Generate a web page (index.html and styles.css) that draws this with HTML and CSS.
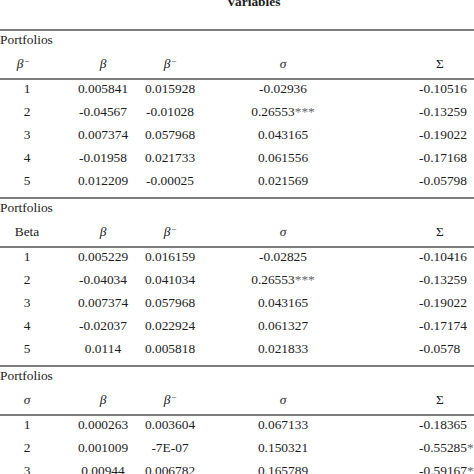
FILE: index.html
```html
<!DOCTYPE html>
<html>
<head>
<meta charset="utf-8">
<link rel="stylesheet" href="styles.css">
</head>
<body>
<div class="page">
  <div class="title">Variables</div>
  <div class="table">
    <div class="section">
      <div class="group">Portfolios</div>
      <div class="row head">
        <div class="c c1 c1s"><span><i>β</i><sup>−</sup></span></div>
        <div class="c"><span><i>β</i></span></div>
        <div class="c"><span><i>β</i><sup>−</sup></span></div>
        <div class="c"><span><i>σ</i></span></div>
        <div class="c c5h">Σ</div>
      </div>
      <div class="body">
        <div class="row"><div class="c c1">1</div><div class="c">0.005841</div><div class="c">0.015928</div><div class="c">-0.02936</div><div class="c c5">-0.10516</div></div>
        <div class="row"><div class="c c1">2</div><div class="c">-0.04567</div><div class="c">-0.01028</div><div class="c"><span>0.26553<span class="st">***</span></span></div><div class="c c5">-0.13259</div></div>
        <div class="row"><div class="c c1">3</div><div class="c">0.007374</div><div class="c">0.057968</div><div class="c">0.043165</div><div class="c c5">-0.19022</div></div>
        <div class="row"><div class="c c1">4</div><div class="c">-0.01958</div><div class="c">0.021733</div><div class="c">0.061556</div><div class="c c5">-0.17168</div></div>
        <div class="row"><div class="c c1">5</div><div class="c">0.012209</div><div class="c">-0.00025</div><div class="c">0.021569</div><div class="c c5">-0.05798</div></div>
      </div>
    </div>
    <div class="section">
      <div class="group">Portfolios</div>
      <div class="row head">
        <div class="c c1">Beta</div>
        <div class="c"><span><i>β</i></span></div>
        <div class="c"><span><i>β</i><sup>−</sup></span></div>
        <div class="c"><span><i>σ</i></span></div>
        <div class="c c5h">Σ</div>
      </div>
      <div class="body">
        <div class="row"><div class="c c1">1</div><div class="c">0.005229</div><div class="c">0.016159</div><div class="c">-0.02825</div><div class="c c5">-0.10416</div></div>
        <div class="row"><div class="c c1">2</div><div class="c">-0.04034</div><div class="c">0.041034</div><div class="c"><span>0.26553<span class="st">***</span></span></div><div class="c c5">-0.13259</div></div>
        <div class="row"><div class="c c1">3</div><div class="c">0.007374</div><div class="c">0.057968</div><div class="c">0.043165</div><div class="c c5">-0.19022</div></div>
        <div class="row"><div class="c c1">4</div><div class="c">-0.02037</div><div class="c">0.022924</div><div class="c">0.061327</div><div class="c c5">-0.17174</div></div>
        <div class="row"><div class="c c1">5</div><div class="c">0.0114</div><div class="c">0.005818</div><div class="c">0.021833</div><div class="c c5">-0.0578</div></div>
      </div>
    </div>
    <div class="section">
      <div class="group">Portfolios</div>
      <div class="row head">
        <div class="c c1"><span><i>σ</i></span></div>
        <div class="c"><span><i>β</i></span></div>
        <div class="c"><span><i>β</i><sup>−</sup></span></div>
        <div class="c"><span><i>σ</i></span></div>
        <div class="c c5h">Σ</div>
      </div>
      <div class="body">
        <div class="row"><div class="c c1">1</div><div class="c">0.000263</div><div class="c">0.003604</div><div class="c">0.067133</div><div class="c c5">-0.18365</div></div>
        <div class="row"><div class="c c1">2</div><div class="c">0.001009</div><div class="c">-7E-07</div><div class="c">0.150321</div><div class="c c5"><span>-0.55285<span class="st">**</span></span></div></div>
        <div class="row"><div class="c c1">3</div><div class="c">0.00944</div><div class="c">0.006782</div><div class="c">0.165789</div><div class="c c5"><span>-0.59167<span class="st">**</span></span></div></div>
      </div>
    </div>
  </div>
</div>
</body>
</html>
```

FILE: styles.css
```css
html, body {
  margin: 0;
  padding: 0;
  background: #ffffff;
  overflow: hidden;
}
.page {
  width: 474px;
  height: 474px;
  overflow: hidden;
  font-family: "Liberation Serif", "Times New Roman", serif;
  font-size: 13.4px;
  color: #1c1c1c;
}
.title {
  font-weight: bold;
  text-align: center;
  padding-left: 33px;
  line-height: 16px;
  height: 16px;
  margin-top: -6px;
  margin-bottom: 19px;
}
.table {
  width: 474px;
  overflow: hidden;
}
.section {
  border-top: 2px solid #7d7d7d;
  padding-bottom: 2px;
}
.group {
  height: 18px;
  line-height: 18px;
  white-space: nowrap;
}
.row {
  display: grid;
  grid-template-columns: 54px 98px 36px 190px 124px;
  width: 502px;
  height: 23px;
  line-height: 17px;
}
.row.head {
  height: 29px;
  line-height: 29px;
  border-bottom: 2px solid #7d7d7d;
}
.c {
  display: flex;
  justify-content: center;
  white-space: nowrap;
}
.c1s {
  padding-right: 8px;
}
.c5 {
  justify-content: flex-start;
  padding-left: 41px;
}
.c5h {
  justify-content: center;
}
.c sup {
  font-size: 9px;
  line-height: 0;
  vertical-align: 4px;
  margin-left: 1px;
}
.st {
  color: #666666;
}
```
